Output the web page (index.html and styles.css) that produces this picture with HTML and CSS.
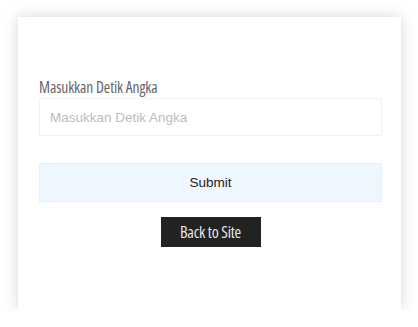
FILE: index.html
```html
<!DOCTYPE html>
<html lang="en">
<head>
  <meta charset="UTF-8"/>
  <meta name="viewport" content="width=device-width, initial-scale=1.0"/>
  <title>Masukkan Detik</title>
  <link rel="stylesheet" href="styles.css">
</head>
<body>
  <main class="page">
    <form class="card" onsubmit="return false;">
      <label class="field-label" for="detik">Masukkan Detik Angka</label>
      <input class="field-input" type="text" id="detik" placeholder="Masukkan Detik Angka">
      <button class="submit-btn" type="submit">Submit</button>
      <a href="#" class="back-btn">Back to Site</a>
    </form>
  </main>
</body>
</html>
```

FILE: styles.css
```css
/* Reset & Base */
*, *::before, *::after { margin:0; padding:0; box-sizing:border-box; }
body {
  background: #fff;
  font-family: "Liberation Sans", Arial, sans-serif;
  color: #222;
}
a { text-decoration:none; color:inherit; }

.page {
  padding: 17px 17px 0 18px;
}

/* Card */
.card {
  width: 383px;
  height: 293px;
  background: #fff;
  box-shadow: 0 0 14px rgba(0,0,0,0.16);
  padding: 60px 19px 0 21px;
  display: flex;
  flex-direction: column;
}
.field-label {
  font-family: "Open Sans", sans-serif;
  font-stretch: 75%;
  font-size: 15.5px;
  line-height: 20px;
  color: #666;
  letter-spacing: -0.1px;
}
.field-input {
  margin-top: 1px;
  height: 38px;
  border: 1px solid #f1f1f1;
  padding: 0 10px;
  font-family: "Liberation Sans", Arial, sans-serif;
  font-size: 13.5px;
  color: #333;
  outline: none;
}
.field-input::placeholder {
  color: #bcbcbc;
}
.submit-btn {
  margin-top: 27px;
  height: 39px;
  background: #eef6ff;
  border: 1px solid #e8eef5;
  font-family: "Liberation Sans", Arial, sans-serif;
  font-size: 13.5px;
  color: #222;
  cursor: pointer;
}
.back-btn {
  align-self: center;
  margin-top: 15px;
  width: 100px;
  height: 30px;
  background: #222;
  color: #e6e6e6;
  font-family: "Open Sans", sans-serif;
  font-stretch: 75%;
  font-size: 16px;
  display: flex;
  align-items: center;
  justify-content: center;
  letter-spacing: -0.2px;
}
```
